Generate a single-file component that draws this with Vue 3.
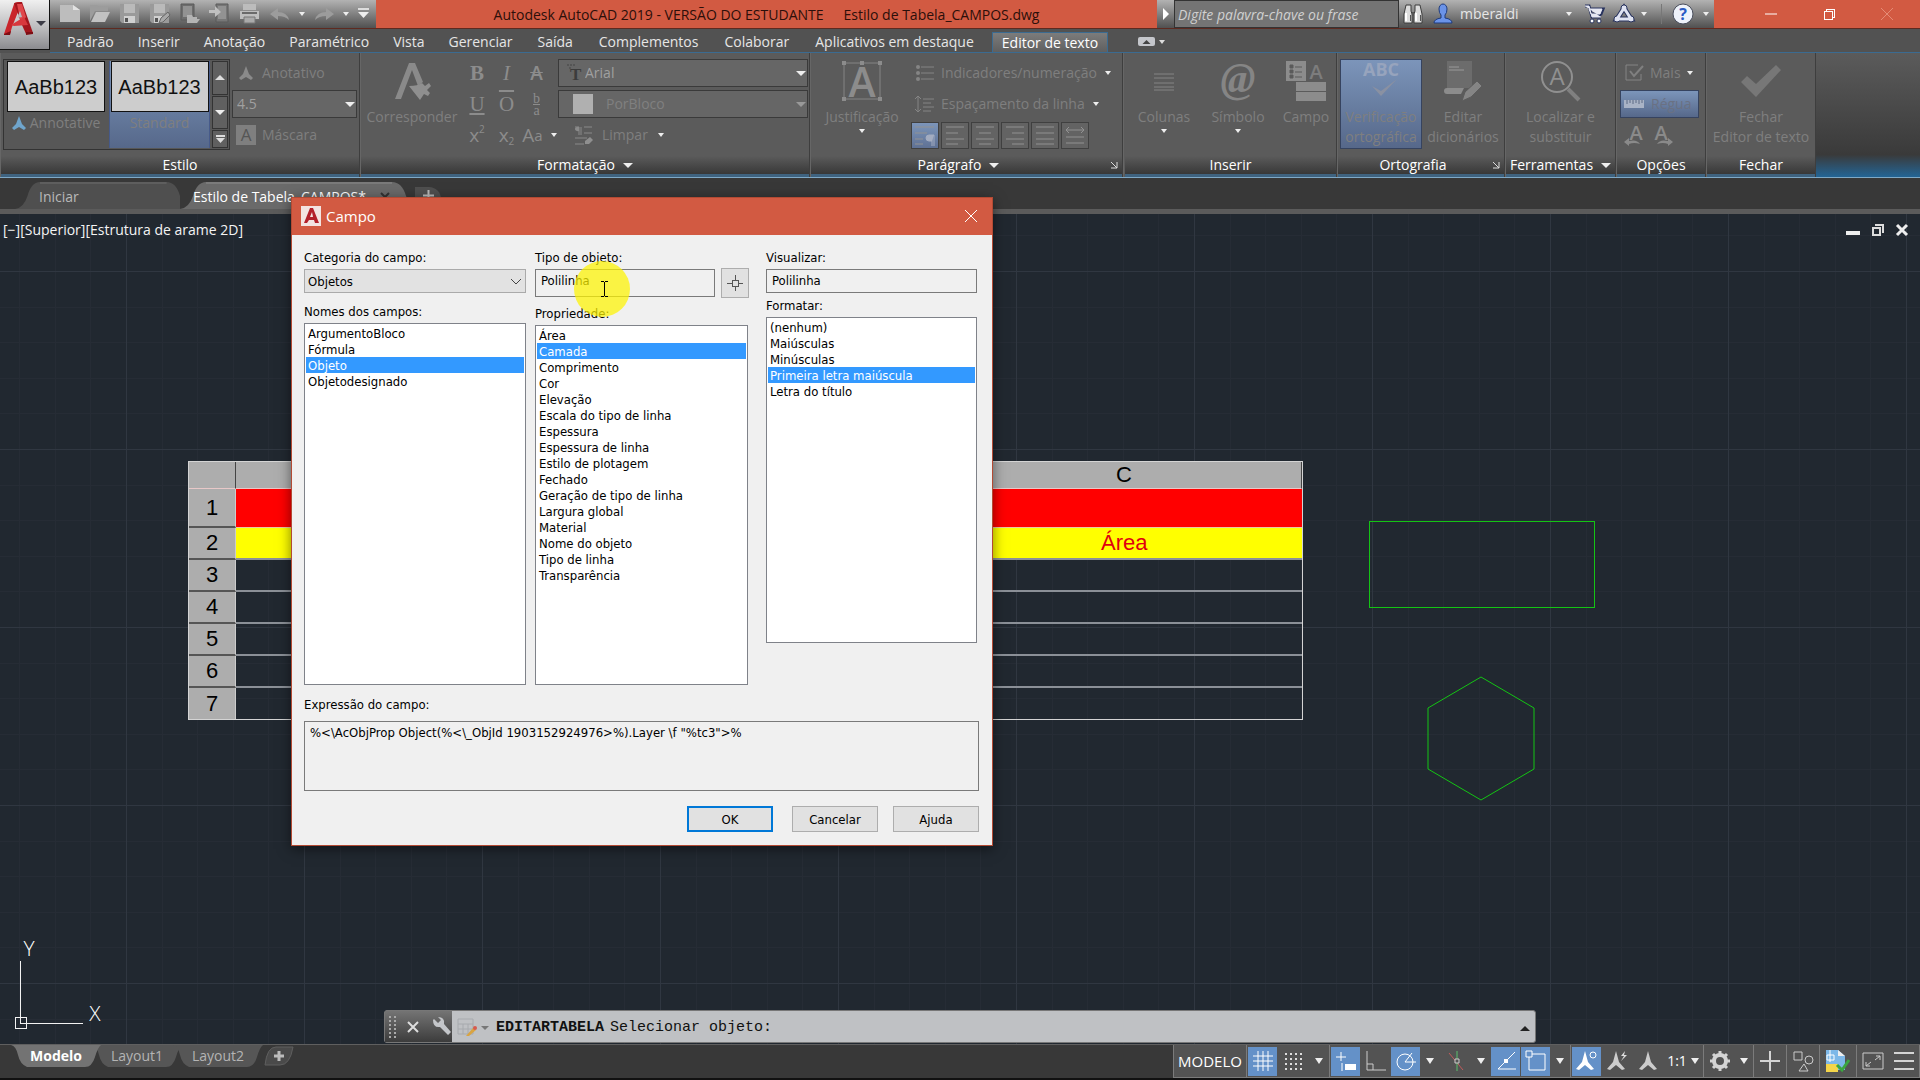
<script setup>
import { ref } from 'vue'

const menuTabs = ['Padrão', 'Inserir', 'Anotação', 'Paramétrico', 'Vista', 'Gerenciar', 'Saída', 'Complementos', 'Colaborar', 'Aplicativos em destaque', 'Editor de texto']

const fieldNames = ['ArgumentoBloco', 'Fórmula', 'Objeto', 'Objetodesignado']
const properties = ['Área', 'Camada', 'Comprimento', 'Cor', 'Elevação', 'Escala do tipo de linha', 'Espessura', 'Espessura de linha', 'Estilo de plotagem', 'Fechado', 'Geração de tipo de linha', 'Largura global', 'Material', 'Nome do objeto', 'Tipo de linha', 'Transparência']
const formats = ['(nenhum)', 'Maiúsculas', 'Minúsculas', 'Primeira letra maiúscula', 'Letra do título']

const category = ref('Objetos')
const fieldName = ref('Objeto')
const property = ref('Camada')
const format = ref('Primeira letra maiúscula')
const expression = ref('%<\\AcObjProp Object(%<\\_ObjId 1903152924976>%).Layer \\f "%tc3">%')

const alignments = [
  { name: 'Padrão do parágrafo', d: 'M3 4h19M3 10h12M3 16h8M3 21h8' },
  { name: 'Esquerda', d: 'M4 4h18M4 10h12M4 16h18M4 21h12' },
  { name: 'Centro', d: 'M4 4h18M7 10h12M4 16h18M7 21h12' },
  { name: 'Direita', d: 'M4 4h18M10 10h12M4 16h18M10 21h12' },
  { name: 'Justificar', d: 'M4 4h18M4 10h18M4 16h18M4 21h18' },
  { name: 'Distribuir', d: 'M4 7h18M7 4L4 7l3 3M19 4l3 3l-3 3M4 14h18M4 20h18' }
]
</script>

<template>
  <div class="app">
    <header class="top">
      <button class="app-button" aria-label="Menu do aplicativo">
        <svg width="30" height="36" viewBox="0 0 30 36">
          <path d="M0 33L10 3q1-2 4-2h4L8 26l-2 7z" fill="#c9252b" />
          <path d="M10 2l8-1 11 31-7 1-4-9z" fill="#a3161d" />
          <path d="M13 3l5 0 4 13-5 6z" fill="#e0474b" />
          <path d="M7 24l13-8 4 8-14 1z" fill="#d8383d" />
          <path d="M13 17l3-7 2 6z" fill="#b9b9bd" />
          <path d="M22 31l7 0 0 2-7 1zM0 33l7-3-1 4H0z" fill="#7e0d13" />
        </svg>
        <i class="caret dark"></i>
      </button>
      <div class="titlebar">
        <div class="quick">
          <button aria-label="Novo"><svg width="22" height="22"><path d="M1 2h13l7 5v12H1z" fill="#bdbdbd" /><path d="M14 2l7 5h-7z" fill="#e2e2e2" /></svg></button>
          <button aria-label="Abrir"><svg width="22" height="22"><path d="M1 18V2h7l2 2h9v4H6z" fill="#9c9c9c" /><path d="M2 19l5-10h14l-5 10z" fill="#c2c2c2" /></svg></button>
          <button aria-label="Salvar"><svg width="22" height="22"><path d="M1 1h19v19H3l-2-2z" fill="#9a9a9a" /><path d="M5 1h11v9H5z" fill="#bababa" /><path d="M5 13h11v7H5z" fill="#d0d0d0" /><path d="M6 15h3v4H6z" fill="#555" /></svg></button>
          <button aria-label="Salvar como"><svg width="22" height="22"><path d="M1 1h19v19H3l-2-2z" fill="#9a9a9a" /><path d="M5 1h11v9H5z" fill="#bababa" /><path d="M5 13h8v7H5z" fill="#d0d0d0" /><path d="M6 15h3v4H6z" fill="#555" /><path d="M10 20l2-5 7-6 2 3-7 7z" fill="#a8a8a8" stroke="#666" /></svg></button>
          <button aria-label="Abrir da web"><svg width="22" height="22"><path d="M2 1h13v16H2z" fill="#6d6d6d" stroke="#5a5a5a" /><path d="M4 3h9v11H4z" fill="#929292" /><path d="M8 20v-8h5l1 2h4v2h3l-3 4z" fill="#b4b4b4" /></svg></button>
          <button aria-label="Salvar na web"><svg width="22" height="22"><path d="M7 1h12v18H7z" fill="#777" stroke="#5a5a5a" /><path d="M9 3h8v13H9z" fill="#929292" /><path d="M0 7h6V3l6 6-6 5v-4H0z" fill="#c0c0c0" /></svg></button>
          <button aria-label="Plotar"><svg width="22" height="22"><path d="M4 1h13v6H4z" fill="#bcbcbc" /><path d="M1 8h19v8H1z" fill="#bebebe" /><path d="M3 10h15" stroke="#6a6a6a" stroke-width="2" /><path d="M5 14h11v6H5z" fill="#aaa" stroke="#777" /></svg></button>
          <button aria-label="Desfazer"><svg width="22" height="22"><path d="M1 11l8-6v4q9 0 11 8-4-4-11-4v4z" fill="#9c9c9c" /></svg></button>
          <i class="caret small"></i>
          <button aria-label="Refazer"><svg width="22" height="22"><path d="M21 11l-8-6v4q-9 0-11 8 4-4 11-4v4z" fill="#9c9c9c" /></svg></button>
          <i class="caret small"></i>
          <button class="narrow" aria-label="Personalizar"><svg width="11" height="12"><path d="M0 1h11" stroke="#ddd" stroke-width="2" /><path d="M0 4h11L5.500 10z" fill="#eee" /></svg></button>
        </div>
        <h1 class="title"><span>Autodesk AutoCAD 2019 - VERSÃO DO ESTUDANTE</span><span>Estilo de Tabela_CAMPOS.dwg</span></h1>
        <div class="info">
          <button class="expand" aria-label="Recolher"><svg width="6" height="12"><path d="M0 0l6 6-6 6z" fill="#fff" /></svg></button>
          <input class="search" type="text" placeholder="Digite palavra-chave ou frase" aria-label="Pesquisar" />
          <button class="ic" aria-label="Buscar"><svg width="20" height="20"><path d="M3 1h5v6l1 3v9H1V10zM12 1h5l2 9v9h-8v-9l1-3z" fill="#ddd" stroke="#3d3d3d" /><path d="M3 9v8M13 9v8" stroke="#fff" stroke-width="2" /><path d="M7 11h1v6H7zM17 11h1v6h-1zM9 8h2v4H9z" fill="#555" /></svg></button>
          <button class="user"><svg width="20" height="20"><path d="M6 5a4 5 0 0 1 8 0q0 4-2 6v3q7 1 7 5H1q0-4 7-5v-3Q6 9 6 5z" fill="#6b93e8" stroke="#1e3b7d" /></svg><span>mberaldi</span><i class="caret small"></i></button>
          <button class="ic" aria-label="App Store"><svg width="20" height="20"><path d="M1 2h4l3 11h9M5 5h14l-2 5H7" fill="#dfe3f2" stroke="#28335e" stroke-width="3" /><path d="M1 2h4l3 11h9M5 5h13l-2 5H7z" fill="#e6e8f2" stroke="#e6e8f2" /><circle cx="8" cy="17" r="2" fill="#fff" stroke="#28335e" /><circle cx="15" cy="17" r="2" fill="#fff" stroke="#28335e" /></svg></button>
          <button class="ic a360" aria-label="Conectividade"><svg width="20" height="20"><path d="M10 4L3 15h14z" fill="none" stroke="#28335e" stroke-width="5" /><g fill="#dfe3f2" stroke="#28335e"><circle cx="10" cy="4" r="3" /><circle cx="3" cy="15" r="3" /><circle cx="17" cy="15" r="3" /></g><path d="M10 4L3 15h14z" fill="none" stroke="#dfe3f2" stroke-width="3" /></svg><i class="caret small"></i></button>
          <button class="help" aria-label="Ajuda do produto"><svg width="22" height="22"><circle cx="11" cy="11" r="10" fill="#eef2fa" stroke="#4a4f5e" /><text x="11" y="17" text-anchor="middle" font-size="16" font-weight="700" fill="#2a5ac4">?</text></svg><i class="caret small"></i></button>
        </div>
        <div class="window-controls">
          <button aria-label="Minimizar janela"><svg width="12" height="12"><path d="M0 6h12" stroke="#fff" /></svg></button>
          <button aria-label="Restaurar janela"><svg width="12" height="12" shape-rendering="crispEdges"><path d="M1 3h8v8H1zM3 3V1h8v8H9" fill="none" stroke="#fff" /></svg></button>
          <button aria-label="Fechar janela"><svg width="12" height="12"><path d="M0 0l12 12M12 0L0 12" stroke="#e58b75" /></svg></button>
        </div>
      </div>
      <nav class="menu">
        <button v-for="t in menuTabs" :key="t" :class="{ active: t === 'Editor de texto' }">{{ t }}</button>
        <button class="ribbon-toggle" aria-label="Minimizar faixa"><svg width="31" height="10"><rect width="17" height="9" rx="2" fill="#c4c6cb" /><path d="M4.500 7h8l-4-4z" fill="#444" /><path d="M21 3h6l-3 4z" fill="#ddd" /></svg></button>
      </nav>
    </header>

    <section class="ribbon">
      <div class="panel p-style">
        <div class="body">
          <div class="gallery">
            <button class="card"><b>AaBb123</b><span><svg width="14" height="14"><path d="M7 0l3 8 4 4-2 2-5-3-5 3-2-2 4-4z" fill="#6fa5cc" /></svg>Annotative</span></button>
            <button class="card on"><b>AaBb123</b><span>Standard</span></button>
            <div class="scroll">
              <button aria-label="Acima"><i class="caret up"></i></button>
              <button aria-label="Abaixo"><i class="caret"></i></button>
              <button class="short" aria-label="Expandir"><svg width="9" height="9"><path d="M0 1h9" stroke="#ddd" stroke-width="2" /><path d="M0 3h9L4.500 8z" fill="#ddd" /></svg></button>
            </div>
          </div>
          <div class="rows style-rows">
            <button class="row"><svg width="20" height="20"><path d="M10 3l3 8 4 4-2 2-5-3-5 3-2-2 4-4z" fill="#8a8a8a" /></svg>Anotativo</button>
            <div class="row combo"><select aria-label="Altura do texto"><option>4.5</option></select><i class="caret"></i></div>
            <button class="row"><svg width="20" height="20"><rect width="20" height="20" fill="#7f7f7f" /><text x="10" y="16" text-anchor="middle" font-size="17" fill="#555">A</text></svg>Máscara</button>
          </div>
        </div>
        <h2>Estilo</h2>
      </div>

      <div class="panel p-format">
        <div class="body">
          <button class="big"><svg width="40" height="40"><path d="M3 38L17 2h6l8 19-5 4-6-16L9 38z" fill="#8a8a8a" /><path d="M17 25q9 0 13-3l3 3 4-3 2 3-4 4 3 3-2 3-4-2-4 6z" fill="#8f8f8f" /></svg><span>Corresponder</span></button>
          <div class="glyphs">
            <button class="serif bold">B</button><button class="serif italic">I</button><button class="strike">A</button>
            <button class="serif under">U</button><button class="serif over">O</button><button class="serif frac"><span>b</span><span>a</span></button>
            <button>x<sup>2</sup></button><button>x<sub>2</sub></button><button class="case">A<small>a</small><i class="caret small"></i></button>
          </div>
          <div class="rows format-rows">
            <div class="row combo font"><svg width="18" height="18"><text x="4" y="16" font-size="17" font-weight="700" class="tt" fill="#3c3c3c">T</text><path d="M1 1h2M4 1h2M7 1h2M3 4h2" stroke="#444" /></svg><select aria-label="Fonte"><option>Arial</option></select><i class="caret"></i></div>
            <div class="row combo color"><svg width="20" height="20"><rect width="20" height="20" fill="#b0b0b0" /></svg><select aria-label="Cor"><option>PorBloco</option></select><i class="caret dim"></i></div>
            <button class="row clear"><svg width="20" height="20"><path d="M1 2h4v8M7 2v8M10 2h8M10 8h8M1 13h12M1 19h9" stroke="#8a8a8a" fill="none" /><path d="M1 4a3 2 0 0 1 4-2v4a3 2 0 0 1-4-2z" fill="#8a8a8a" /><path d="M11 16l5-4 3 3-4 4h-4z" fill="#8f8f8f" /></svg>Limpar<i class="caret small"></i></button>
          </div>
        </div>
        <h2>Formatação<i class="caret title-caret"></i></h2>
      </div>

      <div class="panel p-para">
        <div class="body">
          <button class="big"><svg width="40" height="40"><path d="M2 2h36v36H2z" fill="none" stroke="#858585" /><path d="M0 0h4v4H0zM18 0h4v4h-4zM36 0h4v4h-4zM0 36h4v4H0zM36 36h4v4h-4z" fill="#8c8c8c" /><text x="20" y="36" text-anchor="middle" font-size="41" font-weight="600" fill="#8c8c8c">A</text></svg><span>Justificação</span><i class="caret small"></i></button>
          <div class="rows para-rows">
            <button class="row"><svg width="20" height="18"><g fill="#858585"><circle cx="3" cy="3" r="2" /><circle cx="3" cy="9" r="2" /><circle cx="3" cy="15" r="2" /></g><path d="M6 3h13M6 9h13M6 15h13" stroke="#858585" /></svg>Indicadores/numeração<i class="caret small"></i></button>
            <button class="row"><svg width="20" height="18"><path d="M3 1v16M0 4l3-3 3 3M0 14l3 3 3-3M8 4h11M8 8h8M8 12h11M8 16h8" fill="none" stroke="#858585" /></svg>Espaçamento da linha<i class="caret small"></i></button>
            <div class="row aligns">
              <button v-for="(a, i) in alignments" :key="a.name" :class="{ on: i === 0 }" :aria-label="a.name"><svg width="26" height="25"><path :d="a.d" fill="none" stroke="#929292" /><path v-if="i === 0" d="M22 12v11M20 12v11M22 12h-5a3 3 0 0 0 0 6h3" stroke="#a3acc0" fill="#a3acc0" /></svg></button>
            </div>
          </div>
        </div>
        <h2 class="has-launch">Parágrafo<i class="caret title-caret"></i><svg class="launch" width="8" height="8"><path d="M1 1l6 6M7 1v6H1" fill="none" stroke="#ddd" /></svg></h2>
      </div>

      <div class="panel p-insert">
        <div class="body">
          <button class="big"><svg width="40" height="40"><path d="M10 13h20M10 17h20M10 22h20M10 26h20M10 29h20" stroke="#858585" /></svg><span>Colunas</span><i class="caret small"></i></button>
          <button class="big"><svg width="40" height="40"><text class="tt" x="20" y="31" text-anchor="middle" font-size="42" font-weight="700" font-style="italic" fill="#858585">@</text></svg><span>Símbolo</span><i class="caret small"></i></button>
          <button class="big"><svg width="40" height="40"><path d="M0 0h20v20H0zM10 21h30v9H10zM10 31h30v9H10z" fill="#8c8c8c" /><path d="M4 4h3v3H4zM4 9h3v3H4zM4 14h3v3H4zM9 6h7M9 11h7M9 16h7" fill="#5a5a5a" stroke="#5a5a5a" /><text x="30" y="18" text-anchor="middle" font-size="20" font-weight="600" fill="#7d7d7d">A</text></svg><span>Campo</span></button>
        </div>
        <h2>Inserir</h2>
      </div>

      <div class="panel p-spell">
        <div class="body">
          <button class="big on"><svg width="40" height="40"><text x="20" y="15" text-anchor="middle" font-size="18" font-weight="700" fill="#97a4bd">ABC</text><path d="M11 25l9 10 16-17-16 12z" fill="#8a91a2" /></svg><span>Verificação<br />ortográfica</span></button>
          <button class="big"><svg width="40" height="40"><path d="M4 0h25v27H4z" fill="#6c6c6c" /><path d="M6 6h10M6 9h15" stroke="#999" /><path d="M4 27h17l-3 6H4a3 3 0 0 1 0-6z" fill="#8c8c8c" /><path d="M19 40l3-9 12-11 5 5-11 11z" fill="#858585" stroke="#5c5c5c" /></svg><span>Editar<br />dicionários</span></button>
        </div>
        <h2 class="has-launch">Ortografia<svg class="launch" width="8" height="8"><path d="M1 1l6 6M7 1v6H1" fill="none" stroke="#ddd" /></svg></h2>
      </div>

      <div class="panel p-tools">
        <div class="body">
          <button class="big"><svg width="40" height="40"><circle cx="16" cy="16" r="15" fill="none" stroke="#909090" stroke-width="2" /><path d="M27 28l11 11" stroke="#808080" stroke-width="4" /><text x="16" y="24" text-anchor="middle" font-size="24" fill="#909090">A</text></svg><span>Localizar e<br />substituir</span></button>
        </div>
        <h2>Ferramentas<i class="caret title-caret"></i></h2>
      </div>

      <div class="panel p-options">
        <div class="body">
          <div class="rows">
            <button class="row"><svg width="20" height="20"><path d="M17 11v6H2V2h12" fill="none" stroke="#858585" /><path d="M6 8l4 5 9-10" fill="none" stroke="#808080" stroke-width="2" /></svg>Mais<i class="caret small"></i></button>
            <button class="row on"><svg width="20" height="8"><rect width="20" height="8" fill="#a9b3c6" /><path d="M3 0v4M6 0v3M9 0v4M12 0v3M15 0v4M18 0v3" stroke="#5d6a85" /></svg>Régua</button>
            <div class="row undo">
              <button aria-label="Desfazer texto"><svg width="20" height="22"><text x="12" y="16" text-anchor="middle" font-size="20" font-weight="600" fill="#8a8a8a">A</text><path d="M0 18l5-4v3q8-2 11 3-6-2-11 0v2z" fill="#8a8a8a" /></svg></button>
              <button aria-label="Refazer texto"><svg width="20" height="22"><text x="8" y="16" text-anchor="middle" font-size="20" font-weight="600" fill="#8a8a8a">A</text><path d="M20 18l-5-4v3q-8-2-11 3 6-2 11 0v2z" fill="#8a8a8a" /></svg></button>
            </div>
          </div>
        </div>
        <h2>Opções</h2>
      </div>

      <div class="panel p-close">
        <div class="body">
          <button class="big"><svg width="40" height="40"><path d="M0 21l6-6 9 8L35 4l5 5-25 27z" fill="#777" /></svg><span>Fechar<br />Editor de texto</span></button>
        </div>
        <h2>Fechar</h2>
      </div>
      <div class="ribbon-rest"></div>
    </section>

    <div class="files">
      <button class="file"><svg class="shape" viewBox="0 0 172 27" preserveAspectRatio="none"><path d="M0 27Q9 26 13 14Q17 0 26 0H158Q168 0 172 14V27z" fill="#4f4f4f" /><path d="M26 1H158" stroke="#6f6f6f" /></svg><span>Iniciar</span></button>
      <button class="file current"><svg class="shape" viewBox="0 0 232 27" preserveAspectRatio="none"><path d="M0 27Q9 26 13 14Q17 0 26 0H212Q222 0 226 14L232 27z" fill="#6a6a6a" /><path d="M26 1H212" stroke="#8c8c8c" /></svg><span>Estilo de Tabela_CAMPOS*</span><svg width="10" height="10"><path d="M1 1l8 8M9 1L1 9" stroke="#333" stroke-width="2" /></svg></button>
      <button class="file-add" aria-label="Novo desenho"><svg width="11" height="11"><path d="M5.500 0v11M0 5.500h11" stroke="#bbb" stroke-width="2" /></svg></button>
    </div>

    <main class="canvas">
      <svg class="scene" width="100%" height="100%" shape-rendering="crispEdges">
        <defs>
          <pattern id="grid" x="126" y="57" width="178" height="178" patternUnits="userSpaceOnUse">
            <path d="M36 0h1v178h-1zM71 0h1v178h-1zM107 0h1v178h-1zM142 0h1v178h-1zM0 36h178v1H0zM0 71h178v1H0zM0 107h178v1H0zM0 142h178v1H0z" fill="#262c35" />
            <path d="M0 0h1v178H0zM0 0h178v1H0z" fill="#303741" />
          </pattern>
        </defs>
        <rect width="100%" height="100%" fill="url(#grid)" />
        <rect x="1369" y="307" width="225" height="86" fill="none" stroke="#14c414" />
        <path d="M1481 463l53 31v61l-53 31l-53-31v-61z" fill="none" stroke="#14c414" shape-rendering="auto" />
      </svg>
      <div class="view-bar">
        <span>[−][Superior][Estrutura de arame 2D]</span>
        <span class="mdi">
          <button aria-label="Minimizar desenho"><svg width="14" height="12"><rect y="7" width="14" height="4" fill="#eee" /></svg></button>
          <button aria-label="Restaurar desenho"><svg width="12" height="12"><path d="M3 1h8v8M1 4h7v7H1z" fill="none" stroke="#ddd" stroke-width="2" /></svg></button>
          <button aria-label="Fechar desenho"><svg width="12" height="12"><path d="M1 1l10 10M11 1L1 11" stroke="#eee" stroke-width="3" /></svg></button>
        </span>
      </div>
      <table class="sheet">
        <colgroup><col class="rowhead" /><col /><col /><col /></colgroup>
        <thead><tr><th></th><th></th><th></th><th>C</th></tr></thead>
        <tbody>
          <tr class="red"><th>1</th><td colspan="3"></td></tr>
          <tr class="yellow"><th>2</th><td></td><td></td><td>Área</td></tr>
          <tr v-for="n in [3, 4, 5, 6, 7]" :key="n"><th>{{ n }}</th><td></td><td></td><td></td></tr>
        </tbody>
      </table>
      <svg class="ucs" width="100" height="110" shape-rendering="crispEdges">
        <path d="M10 26v62h63M5 82h11v11H5z" transform="translate(0 1)" fill="none" stroke="#f2f2f2" />
        <text x="19" y="22" text-anchor="middle" font-size="21" font-weight="300" fill="#fff">Y</text>
        <text x="85" y="87" text-anchor="middle" font-size="21" font-weight="300" fill="#fff">X</text>
      </svg>
      <div class="command">
        <div class="command-tools">
          <svg width="8" height="22"><path d="M1 0v22M6 0v22" stroke="#aaa" stroke-width="2" stroke-dasharray="2 2" /></svg>
          <button aria-label="Fechar linha de comando"><svg width="12" height="12"><path d="M1 1l10 10M11 1L1 11" stroke="#ddd" stroke-width="2" /></svg></button>
          <button aria-label="Personalizar comando"><svg width="20" height="20"><path d="M2 2l4 4 3-3-3-3q7 0 6 7l7 8-3 3-8-8Q1 11 1 3z" fill="#c4c6ca" /></svg></button>
        </div>
        <div class="prompt">
          <svg width="20" height="20"><path d="M1 1h15v15H1zM1 6h15M1 11h15M6 6v10M11 6v10" fill="none" stroke="#a7aaae" /><path d="M9 18l7-8 3 2-7 6z" fill="#d9a441" /><circle cx="18" cy="10" r="2" fill="#d65a4f" /></svg>
          <i class="caret grey"></i>
          <b>EDITARTABELA</b><span>Selecionar objeto:</span>
          <i class="caret up black"></i>
        </div>
      </div>
    </main>

    <footer class="bottom">
      <div class="layouts">
        <button class="layout current"><svg class="shape" viewBox="0 0 90 23" preserveAspectRatio="none"><path d="M0 0Q5 1 7 10T16 22H74Q81 22 84 12T90 0z" fill="#737373" /></svg><span>Modelo</span></button>
        <button class="layout"><svg class="shape" viewBox="0 0 90 23" preserveAspectRatio="none"><path d="M0 0Q5 1 7 10T16 22H74Q81 22 84 12T90 0z" fill="#565656" /></svg><span>Layout1</span></button>
        <button class="layout"><svg class="shape" viewBox="0 0 90 23" preserveAspectRatio="none"><path d="M0 0Q5 1 7 10T16 22H74Q81 22 84 12T90 0z" fill="#565656" /></svg><span>Layout2</span></button>
        <button class="add" aria-label="Novo layout"><svg width="30" height="22"><path d="M1 20Q3 2 12 2H29Q26 20 16 20z" fill="#4a4a4a" stroke="#5f5f5f" /><path d="M15 6v10M10 11h10" stroke="#bbb" stroke-width="3" /></svg></button>
      </div>
      <div class="status">
        <div class="group"><button class="model">MODELO</button></div>
        <div class="group">
          <button class="on" aria-label="Grade"><svg width="22" height="22"><path d="M6 1v20M11 1v20M16 1v20M1 6h20M1 11h20M1 16h20" stroke="#fff" /></svg></button>
          <button class="wide" aria-label="Snap"><svg width="17" height="18"><path d="M0 2h17M0 7h17M0 12h17M0 17h17" stroke="#ddd" stroke-width="2" stroke-dasharray="2 3" /></svg></button>
          <button class="drop" aria-label="Opções de snap"><i class="caret"></i></button>
        </div>
        <div class="group">
          <button class="on" aria-label="Entrada dinâmica"><svg width="22" height="22"><path d="M6 2v9M1 7h10" stroke="#fff" /><path d="M10 14h11v6H10z" fill="#fff" /><path d="M7 13v8" stroke="#fff" /></svg></button>
          <button aria-label="Orto"><svg width="22" height="22"><path d="M2 1v19h19M2 14h6v6" fill="none" stroke="#ccc" /></svg></button>
          <button class="on" aria-label="Polar"><svg width="22" height="22"><circle cx="10" cy="12" r="8" fill="none" stroke="#fff" /><path d="M10 12h11M10 12l7-9" stroke="#fff" /></svg></button>
          <button class="drop" aria-label="Opções polares"><i class="caret"></i></button>
          <button class="wide" aria-label="Isométrico"><svg width="20" height="22"><path d="M3 3l14 17" stroke="#c25b5b" /><path d="M11 1v20" stroke="#5bbf6c" /><path d="M9 9h4v4H9z" fill="#555" stroke="#ccc" /></svg></button>
          <button class="drop" aria-label="Opções isométricas"><i class="caret"></i></button>
          <button class="on" aria-label="Rastreamento"><svg width="22" height="22"><path d="M20 2L3 19h18" fill="none" stroke="#fff" /><path d="M9 9h4v4H9z" fill="#fff" /></svg></button>
          <button class="on" aria-label="Snap ao objeto"><svg width="22" height="22"><path d="M4 4h16v16H4z" fill="none" stroke="#fff" /><path d="M1 1h6v6H1z" fill="#6491c8" stroke="#fff" /></svg></button>
          <button class="drop" aria-label="Opções de snap ao objeto"><i class="caret"></i></button>
        </div>
        <div class="group">
          <button class="on" aria-label="Visibilidade da anotação"><svg width="22" height="22"><path d="M9 1l3 11 6 7-3 1-6-5-6 5-3-1 6-7z" fill="#fff" /><circle cx="17" cy="5" r="3" fill="none" stroke="#fff" /></svg></button>
          <button aria-label="Escala automática"><svg width="22" height="22"><path d="M10 1l3 11 6 7-3 1-6-5-6 5-3-1 6-7z" fill="#ccc" /><path d="M19 1l-4 5h3l-3 5 6-6h-3z" fill="#ddd" /></svg></button>
          <button class="wide" aria-label="Escala"><svg width="22" height="22"><path d="M11 1l3 11 6 7-3 1-6-5-6 5-3-1 6-7z" fill="#ccc" /></svg></button>
          <button class="scale">1:1<i class="caret"></i></button>
        </div>
        <div class="group">
          <button class="gear" aria-label="Espaço de trabalho"><svg width="22" height="22"><circle cx="11" cy="11" r="6" fill="none" stroke="#d4d4d4" stroke-width="4" /><path d="M11 1v4M11 17v4M1 11h4M17 11h4M4 4l3 3M15 15l3 3M18 4l-3 3M7 15l-3 3" stroke="#d4d4d4" stroke-width="3" /></svg><i class="caret"></i></button>
        </div>
        <div class="group"><button class="plus" aria-label="Monitor de anotação"><svg width="20" height="20"><path d="M10 0v20M0 10h20" stroke="#d4d4d4" stroke-width="2" /></svg></button></div>
        <div class="group"><button class="plus" aria-label="Isolar objetos"><svg width="22" height="22"><path d="M2 2h8v8H2zM7 21l5-7 4 7z" fill="none" stroke="#ccc" /><circle cx="17" cy="10" r="4" fill="none" stroke="#ccc" /></svg></button></div>
        <div class="group"><button class="perf" aria-label="Desempenho gráfico"><svg width="26" height="24"><path d="M1 1h12l7 6v14H1z" fill="#7db8e8" /><path d="M13 1l7 6h-7z" fill="#eee" /><path d="M5 1v12M2 6h7v5H2z" fill="none" stroke="#fff" /><path d="M1 15h12v8H1z" fill="#f4d54a" /><path d="M12 16l5 5 7-10" fill="none" stroke="#3aa640" stroke-width="3" /></svg></button></div>
        <div class="group">
          <button class="plus" aria-label="Tela limpa"><svg width="22" height="18"><path d="M1 1h20v16H1z" fill="none" stroke="#ccc" /><path d="M4 14l5-4M4 10v4h4M18 4l-5 4M14 4h4v4" fill="none" stroke="#ccc" /></svg></button>
          <button aria-label="Personalização"><svg width="22" height="18"><path d="M1 1h20M1 9h20M1 17h20" stroke="#d4d4d4" stroke-width="2" /></svg></button>
        </div>
      </div>
    </footer>

    <form class="dialog" role="dialog" aria-labelledby="dialog-title" @submit.prevent>
      <div class="dialog-title">
        <svg width="20" height="20"><rect width="20" height="20" fill="#f3e3e1" /><path d="M3 17L9 2h3l6 15h-4l-1-3H8l-2 3z" fill="#b3202a" /><path d="M9 11l2-5 1 5z" fill="#f3e3e1" /></svg>
        <h2 id="dialog-title">Campo</h2>
        <button type="button" aria-label="Fechar"><svg width="12" height="12"><path d="M0 0l12 12M12 0L0 12" stroke="#fff" /></svg></button>
      </div>
      <div class="dialog-body">
        <div class="columns">
          <div class="col names">
            <label for="category">Categoria do campo:</label>
            <div class="category"><select id="category" v-model="category"><option>Objetos</option></select><svg width="10" height="6"><path d="M0 0l5 5 5-5" fill="none" stroke="#444" /></svg></div>
            <label class="gap-l" for="names">Nomes dos campos:</label>
            <select id="names" v-model="fieldName" class="list tall" size="4"><option v-for="n in fieldNames" :key="n">{{ n }}</option></select>
          </div>
          <div class="col props">
            <label for="type">Tipo de objeto:</label>
            <div class="pick"><input id="type" class="field" type="text" value="Polilinha" readonly /><button type="button" aria-label="Selecionar objeto"><svg width="16" height="16" shape-rendering="crispEdges"><path d="M8 0v5M8 11v5M0 8h5M11 8h5M5 5h6v6H5z" fill="none" stroke="#555" /></svg></button></div>
            <label for="props">Propriedade:</label>
            <select id="props" v-model="property" class="list tall" size="16"><option v-for="p in properties" :key="p">{{ p }}</option></select>
          </div>
          <div class="col formats">
            <label for="preview">Visualizar:</label>
            <input id="preview" class="field" type="text" value="Polilinha" readonly />
            <label class="gap-s" for="formats">Formatar:</label>
            <select id="formats" v-model="format" class="list" size="5"><option v-for="f in formats" :key="f">{{ f }}</option></select>
          </div>
        </div>
        <label class="expr-label" for="expr">Expressão do campo:</label>
        <textarea id="expr" readonly :value="expression"></textarea>
        <div class="actions">
          <button class="default">OK</button>
          <button type="button">Cancelar</button>
          <button type="button">Ajuda</button>
        </div>
      </div>
      <div class="pointer"><svg width="7" height="16" shape-rendering="crispEdges"><path d="M0 0h3v1h1V0h3v1H4v14h3v1H4v-1H3v1H0v-1h3V1H0z" fill="#000" /></svg></div>
    </form>
  </div>
</template>

<style>
body {
  background: #212830;
}
</style>

<style scoped>
.app {
  position: relative;
  display: flex;
  flex-direction: column;
  min-height: 100vh;
  overflow: hidden;
  font: 14px/20px "Open Sans", "Noto Sans", sans-serif;
  color: #e6e6e6;
}
.app *,
.app *::before {
  box-sizing: border-box;
}
button {
  display: flex;
  align-items: center;
  justify-content: center;
  flex: none;
  margin: 0;
  padding: 0;
  border: 0;
  background: none;
  font: inherit;
  color: inherit;
  white-space: nowrap;
}
svg {
  display: block;
  flex: none;
  overflow: visible;
}
h1,
h2 {
  margin: 0;
  font: inherit;
}
.caret {
  flex: none;
  border: 5px solid transparent;
  border-top-color: #eee;
  border-bottom: 0;
}
.caret.small {
  border-width: 3px;
  border-top-width: 4px;
  border-bottom: 0;
}
.caret.up {
  border-top: 0;
  border-bottom: 5px solid #ddd;
}
.caret.dark { border-top-color: #3c3c46; }
.caret.dim { border-top-color: #999; }
.caret.grey { border-top-color: #777; border-width: 4px; border-bottom: 0; }
.caret.up.black { border-bottom-color: #222; }

/* title bar and menu */
.top {
  display: grid;
  grid-template: 29px 24px / 50px 1fr;
  background: #525252;
}
.app-button {
  grid-row: 1 / 3;
  height: 50px;
  gap: 2px;
  align-items: flex-start;
  padding-top: 1px;
  border: solid #111;
  border-width: 0 1px 1px 0;
  background: linear-gradient(#f0f0f0, #b9b9bb 60%, #8b8b8f);
}
.app-button .caret { margin-top: 20px; }
.titlebar {
  display: flex;
  background: #d25a42;
  border-bottom: 1px solid #5e2a20;
}
.quick,
.info {
  display: flex;
  align-items: center;
  background: linear-gradient(#b2b2b2, #505050);
}
.quick {
  width: 326px;
  gap: 8px;
  padding-left: 9px;
}
.quick .narrow { margin-left: 1px; }
.title {
  display: flex;
  flex: 1;
  justify-content: center;
  gap: 20px;
  color: #2c0f0a;
  line-height: 29px;
  white-space: nowrap;
}
.info { width: 557px; }
.expand { width: 17px; }
.search {
  width: 225px;
  height: 28px;
  margin: 0 4px 0 0;
  padding: 0 3px;
  border: 1px solid #333;
  background: #747474;
  font: italic 14px "Open Sans", "Noto Sans", sans-serif;
  color: #ddd;
}
.search::placeholder { color: #d0d0d0; }
.user { margin: 0 12px 0 10px; gap: 7px; }
.user span { width: 98px; text-align: left; }
.user .caret { margin-left: 1px; }
.a360 { margin-left: 10px; gap: 7px; padding-right: 14px; border-right: 1px solid #777; }
.help { margin-left: 10px; gap: 9px; }
.window-controls {
  display: flex;
  width: 206px;
  padding-left: 28px;
}
.window-controls button { width: 58px; }
.menu {
  display: flex;
  align-items: flex-end;
  padding-left: 5px;
  border-bottom: 1px solid #3b6b91;
}
.menu button {
  height: 20px;
  padding: 0 12px;
}
.menu button:nth-child(n + 7) { padding: 0 13px; }
.menu .active {
  margin-left: 5px;
  border: solid #3b6b91;
  border-width: 1px 1px 0;
  background: linear-gradient(#7c7c7c, #5f5f5f);
  color: #fff;
}
.menu button.active { padding: 0 9px; }
.menu button.ribbon-toggle { padding: 0 30px; }

/* ribbon */
.ribbon {
  display: flex;
  height: 125px;
  background: #5b5b5b;
  border-bottom: 1px solid #7fa9c6;
  color: #7f7f7f;
}
.panel {
  display: flex;
  flex: none;
  flex-direction: column;
  border-right: 1px solid #3e3e3e;
  border-left: 1px solid #666;
}
.body {
  display: flex;
  height: 103px;
  padding-top: 6px;
}
.panel h2 {
  position: relative;
  display: flex;
  align-items: center;
  justify-content: center;
  gap: 8px;
  height: 21px;
  border-bottom: 3px solid #3f6380;
  background: linear-gradient(#5b5b5b, #383838);
  color: #fff;
}
.panel .has-launch { padding-right: 16px; }
.launch {
  position: absolute;
  right: 4px;
}
.rows {
  display: flex;
  flex-direction: column;
  gap: 3px;
}
.row {
  display: flex;
  align-items: center;
  justify-content: flex-start;
  gap: 6px;
  height: 28px;
}
.combo {
  position: relative;
  border: 1px solid #3a3a3a;
  background: #666;
}
.combo select {
  flex: 1;
  min-width: 0;
  padding: 0;
  border: 0;
  background: none;
  appearance: none;
  font: inherit;
  color: #a0a0a0;
}
.combo .caret { margin-right: 1px; }
.big {
  flex-direction: column;
  justify-content: flex-start;
  height: 90px;
  padding-top: 2px;
  gap: 6px;
}
.big > .caret { margin-top: -4px; }
.on {
  background: linear-gradient(#7c95ba, #56688a);
  border: 1px solid #36435f;
}

.p-style { width: 360px; }
.p-style .body { padding-left: 2px; gap: 2px; }
.gallery {
  display: flex;
  width: 227px;
  height: 91px;
  padding: 1px 1px 1px 3px;
  gap: 4px;
  border: 1px solid #333;
  background: #575757;
}
.card {
  flex-direction: column;
  justify-content: flex-start;
  width: 98px;
  gap: 1px;
}
.card.on { width: 101px; border-width: 0 1px; border-color: #465a8a; }
.card b {
  width: 98px;
  height: 51px;
  border: 1px solid #111;
  background: #cdcdcd;
  font: 20px/50px "Liberation Sans", Arial, sans-serif;
  color: #111;
}
.card span { display: flex; gap: 4px; align-items: center; }
.scroll {
  display: flex;
  flex: 1;
  flex-direction: column;
  gap: 1px;
  margin-left: -2px;
}
.scroll button {
  flex: 1;
  border: 1px solid #333;
  background: #606060;
}
.scroll .short { flex: 0 0 18px; }
.style-rows { width: 125px; }
.style-rows .row { padding-left: 4px; }

.p-format { width: 450px; }
.p-format .big { width: 92px; margin: 0 4px 0 5px; }
.glyphs {
  display: grid;
  grid-template: repeat(3, 28px) / 30px 29px 37px;
  row-gap: 3px;
  color: #8c8c8c;
  font-size: 19px;
}
.serif { font-family: "Liberation Serif", serif; font-size: 21px; }
.bold { font-weight: 700; }
.italic { font-style: italic; }
.strike { font-weight: 600; text-decoration: line-through; }
.under { text-decoration: underline; }
.over { text-decoration: overline; }
.strike,
.frac { padding-right: 6px; }
.frac { flex-direction: column; font-size: 14px; line-height: 11px; }
.frac span + span { border-top: 1px solid #8c8c8c; }
.glyphs sup,
.glyphs sub { font-size: 10px; line-height: 10px; }
.glyphs sup { align-self: flex-start; margin-top: 3px; }
.glyphs sub { align-self: flex-end; margin-bottom: 3px; }
.case small { font-size: 15px; margin-right: 8px; }
.format-rows { width: 250px; }
.font { padding-left: 7px; gap: 1px; }
.tt { font-family: "Liberation Serif", serif; }
.color { padding-left: 14px; gap: 13px; }
.color select { color: #808080; }
.clear { padding-left: 16px; gap: 8px; }
.clear .caret { margin-left: 2px; }

.p-para { width: 313px; }
.p-para .big { width: 96px; margin: 0 1px 0 3px; }
.para-rows .row { padding-left: 4px; }
.para-rows .caret { margin-left: 2px; }
.para-rows .aligns { gap: 2px; padding: 0; }
.aligns button {
  width: 28px;
  height: 27px;
  border: 1px solid #404040;
  background: #636363;
}
.aligns .on { background: linear-gradient(#7c95ba, #5f7194); }

.p-insert { width: 214px; padding-left: 1px; }
.p-insert .body { padding-left: 2px; }
.p-insert .big { width: 74px; }
.p-insert .big:last-child { width: 62px; }
.p-spell { width: 168px; }
.p-spell .body { padding-left: 2px; }
.p-spell .big { width: 82px; }
.p-spell .big.on { padding-top: 1px; }
.p-tools { width: 111px; }
.p-tools .big,
.p-close .big { width: 100%; }
.p-options { width: 90px; }
.p-options .body { padding-left: 3px; }
.p-options .row { width: 79px; padding-left: 4px; }
.p-options .on { padding-left: 3px; gap: 7px; color: #6a7183; }
.p-options .undo { gap: 9px; }
.p-close { width: 110px; }
.ribbon-rest {
  flex: 1;
  background: linear-gradient(#5b5b5b, #3a3a3a 82%, #236596);
}

/* drawing tabs */
.files {
  display: flex;
  align-items: flex-end;
  height: 36px;
  padding-left: 15px;
  border-bottom: 5px solid #5b5b5b;
  background: #383838;
}
.file {
  position: relative;
  justify-content: flex-start;
  width: 165px;
  height: 27px;
  padding: 3px 0 0 24px;
  color: #b9b9b9;
}
.file.current { width: 232px; padding-left: 13px; gap: 14px; color: #fff; }
.file > *:not(.shape) { position: relative; }
.shape {
  position: absolute;
  inset: 0;
  width: 100%;
  height: 100%;
}
.file-add {
  width: 26px;
  height: 22px;
  margin-left: 3px;
  padding-bottom: 5px;
  border-radius: 0 12px 0 0;
  background: #4f4f4f;
}

/* drawing area */
.canvas {
  position: relative;
  flex: 1;
  min-height: 820px;
  background: #212830;
}
.scene {
  position: absolute;
  inset: 0;
}
.view-bar {
  position: relative;
  display: flex;
  justify-content: space-between;
  padding: 6px 12px 0 3px;
  color: #f4f4f4;
}
.mdi {
  display: flex;
  align-items: center;
  gap: 12px;
}
.sheet {
  position: absolute;
  top: 247px;
  left: 188px;
  width: 1115px;
  table-layout: fixed;
  border-spacing: 0;
  border: 1px solid #d4d4d4;
  font: 22px/28px "Liberation Sans", Arial, sans-serif;
  text-align: center;
}
.sheet .rowhead { width: 47px; }
.sheet th,
.sheet td {
  height: 32px;
  padding: 0;
  border-bottom: 2px solid #8b9097;
}
.sheet th {
  background: #adadad;
  border-bottom-color: #555;
  border-right: 1px solid #ccc;
  font-weight: 400;
  color: #000;
}
.sheet tbody tr:last-child > * { border-bottom: 0; height: 31px; }
.sheet thead th { height: 27px; line-height: 24px; border-bottom: 1px solid #e8c8c8; border-right-color: #444; }
.sheet .red > * { height: 39px; }
.sheet .red td { background: #f00; border-bottom: 1px solid #e9c9a0; }
.sheet .yellow td { background: #ff0; color: #e00010; }
.ucs {
  position: absolute;
  left: 10px;
  bottom: 0;
}
.command {
  position: absolute;
  left: 20%;
  bottom: 1px;
  display: flex;
  width: 60%;
  height: 33px;
  border: 1px solid #777;
  border-radius: 3px;
  background: #bfc1c4;
}
.command-tools {
  display: flex;
  align-items: center;
  gap: 10px;
  width: 67px;
  padding-left: 4px;
  background: linear-gradient(#747474, #3c3c3c);
}
.command-tools button + button { margin-left: 3px; }
.prompt {
  display: flex;
  flex: 1;
  align-items: center;
  padding: 3px 5px 0;
  font: 15px/20px "Liberation Mono", monospace;
  color: #111;
}
.prompt .grey { margin: 0 7px 0 4px; }
.prompt b { margin-right: 6px; }
.prompt .black { margin-left: auto; }

/* layout tabs and status bar */
.bottom {
  display: flex;
  justify-content: space-between;
  height: 36px;
  border-top: 1px solid #5f5f5f;
  border-bottom: 2px solid #111;
  background: #383838;
}
.layouts {
  display: flex;
  padding-left: 11px;
}
.layout {
  position: relative;
  width: 90px;
  height: 23px;
  margin-right: -9px;
  padding-bottom: 1px;
  color: #b4b4b4;
}
.layout span { position: relative; }
.layout.current { z-index: 1; color: #fff; font-weight: 700; }
.add { height: 22px; margin-left: 10px; }
.status {
  display: flex;
  background: #535353;
}
.group {
  display: flex;
  align-items: center;
  gap: 1px;
  padding: 0 1px;
  border: solid #7b7b7b;
  border-width: 0 1px 1px 0;
}
.group:first-child { border-left-width: 1px; }
.group button { width: 29px; height: 29px; }
.group .on { border: 0; background: #6491c8; }
.group .wide { width: 31px; }
.group .drop { width: 18px; }
.group .model { width: 70px; color: #fff; font-size: 15px; }
.group .scale { width: 38px; gap: 4px; color: #fff; }
.group .gear { width: 47px; gap: 9px; }
.group .plus { width: 30px; }
.group .perf { width: 34px; }
.group .caret { border-width: 4px; border-top-width: 6px; border-bottom: 0; }

/* field dialog */
.dialog {
  position: absolute;
  top: 197px;
  left: 291px;
  width: 702px;
  border: 1px solid #b34a33;
  background: #f0f0f0;
  box-shadow: 0 3px 12px rgba(0, 0, 0, 0.5);
  color: #000;
  font: 13px/16px "DejaVu Sans Condensed", "DejaVu Sans", sans-serif;
}
.dialog-title {
  display: flex;
  align-items: center;
  gap: 5px;
  height: 37px;
  padding: 0 15px 2px 9px;
  background: #d25a42;
  color: #fff;
  font: 15px/20px "Open Sans", "Noto Sans", sans-serif;
}
.dialog-title button { margin-left: auto; }
.dialog-body { padding: 15px 13px 13px 12px; }
.columns {
  display: flex;
  align-items: flex-start;
  gap: 9px;
}
.col {
  display: flex;
  flex: none;
  flex-direction: column;
}
.names { width: 222px; }
.props { width: 213px; }
.formats { width: 211px; margin-left: 9px; }
.dialog label {
  height: 16px;
  margin-bottom: 3px;
  white-space: nowrap;
}
.dialog select,
.field,
.dialog textarea {
  margin: 0;
  font: inherit;
  color: #000;
}
.category {
  position: relative;
  display: flex;
}
.category select {
  flex: 1;
  height: 24px;
  padding: 1px 3px 0;
  border: 1px solid #aaa;
  border-radius: 0;
  background: #e2e2e2;
  appearance: none;
}
.category svg {
  position: absolute;
  top: 10px;
  right: 5px;
}
.dialog .gap-l { margin: 11px 0 3px; }
.dialog .gap-s { margin: 5px 0 3px; }
.list {
  height: 326px;
  padding: 1px;
  border: 1px solid #7f8289;
  border-radius: 0;
  background: #fff;
  overflow: hidden;
}
.list.tall { height: 362px; }
.props .list.tall { height: 360px; }
.list option {
  height: 16px;
  min-height: 16px;
  padding: 1px 2px 0;
  line-height: 15px;
}
.list option:checked {
  background: #3399ff;
  color: #fff;
}
.field {
  height: 24px;
  padding: 0 5px 2px;
  border: 1px solid #7a7a7a;
  border-radius: 0;
  background: #f0f0f0;
}
.pick {
  display: flex;
  align-items: center;
  gap: 6px;
  height: 30px;
  margin: -1px 0 8px;
}
.pick .field { flex: none; width: 180px; height: 28px; padding-bottom: 6px; }
.pick button {
  width: 28px;
  height: 30px;
  border: 1px solid #adadad;
  background: #e1e1e1;
}
.dialog .expr-label {
  display: block;
  margin: 12px 0 8px;
}
.dialog textarea {
  display: block;
  width: 100%;
  height: 70px;
  padding: 3px 5px;
  border: 1px solid #7a7a7a;
  border-radius: 0;
  background: #f0f0f0;
  resize: none;
}
.actions {
  display: flex;
  justify-content: flex-end;
  gap: 15px;
  margin-top: 15px;
}
.actions button {
  width: 86px;
  height: 26px;
  padding-top: 1px;
  border: 1px solid #adadad;
  background: #e1e1e1;
}
.actions .default {
  margin-right: 4px;
  border: 2px solid #0078d7;
}
.pointer {
  position: absolute;
  top: 63px;
  left: 282px;
  display: flex;
  align-items: center;
  justify-content: center;
  width: 56px;
  height: 56px;
  padding-left: 4px;
  border-radius: 50%;
  background: rgba(253, 244, 0, 0.72);
}
</style>
